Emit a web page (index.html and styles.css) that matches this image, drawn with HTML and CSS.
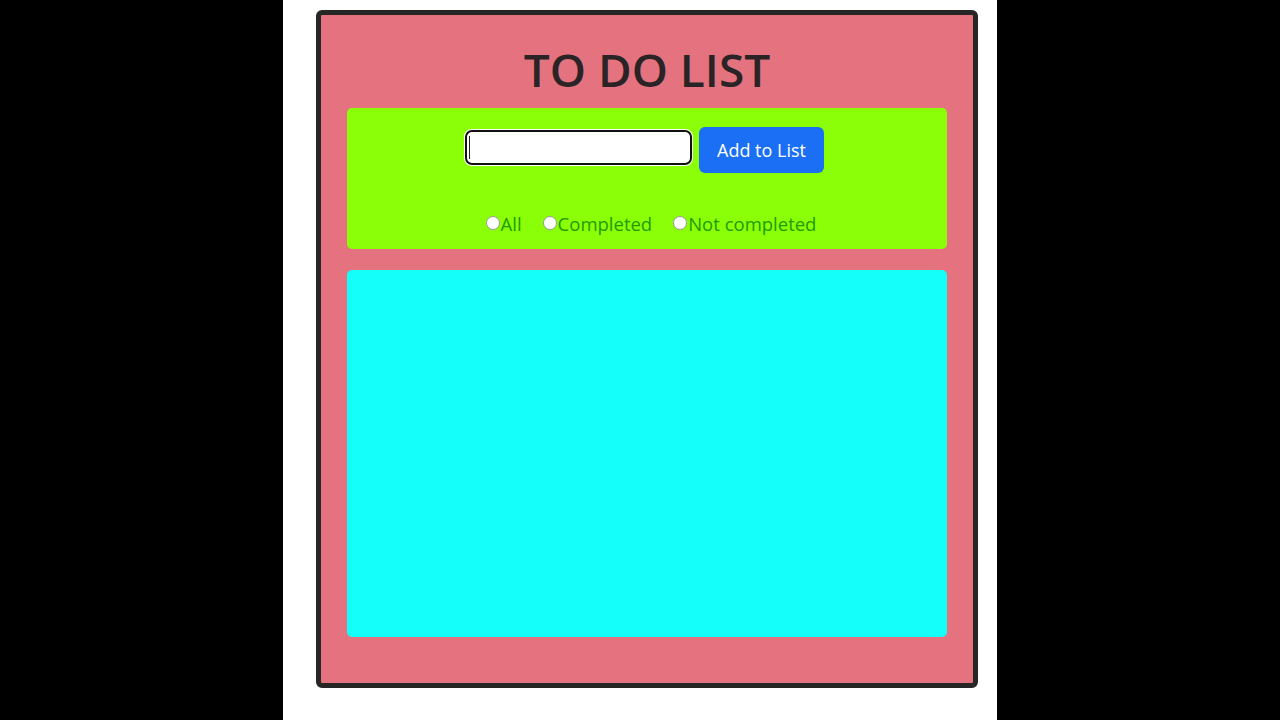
FILE: index.html
```html
<!DOCTYPE html>
<html>
<head>
<meta charset="utf-8">
<link rel="stylesheet" href="styles.css">
</head>
<body>
<div class="page">
  <div class="card">
    <h1 class="title">TO DO LIST</h1>
    <div class="controls">
      <div class="add-row">
        <div class="input-wrap">
          <input class="task-input" type="text">
          <span class="caret"></span>
        </div>
        <button class="add-btn">Add to List</button>
      </div>
      <div class="filters">
        <label class="filter"><span class="radio"></span>All</label>
        <label class="filter"><span class="radio"></span>Completed</label>
        <label class="filter"><span class="radio"></span>Not completed</label>
      </div>
    </div>
    <div class="list"></div>
  </div>
</div>
</body>
</html>
```
FILE: styles.css
```css
html, body {
  margin: 0;
  height: 100%;
  background: #000;
}
body {
  display: flex;
  justify-content: flex-start;
  font-family: "Open Sans", "Noto Sans", sans-serif;
}
.page {
  margin-left: 283px;
  width: 714px;
  height: 720px;
  background: #fff;
  padding: 10px 0 0 33px;
  box-sizing: border-box;
}
.card {
  width: 662px;
  height: 678px;
  box-sizing: border-box;
  border: 5px solid #262626;
  border-radius: 6px;
  background: #e5737f;
  padding: 0 26px;
  display: flex;
  flex-direction: column;
}
.title {
  margin: 0;
  height: 93px;
  box-sizing: border-box;
  padding-top: 26px;
  text-align: center;
  font-size: 46px;
  font-weight: 600;
  line-height: 56px;
  color: #2a2426;
}
.controls {
  height: 141px;
  background: #8aff08;
  border-radius: 5px;
  display: flex;
  flex-direction: column;
  align-items: center;
  padding-top: 19px;
  box-sizing: border-box;
}
.add-row {
  display: flex;
  align-items: flex-start;
  gap: 7px;
  margin-left: -5px;
}
.input-wrap {
  position: relative;
  margin-top: 3px;
}
.task-input {
  display: block;
  width: 227px;
  height: 35px;
  box-sizing: border-box;
  border: 2px solid #111;
  border-radius: 7px;
  background: #fff;
  outline: none;
  box-shadow: 0 0 0 1px #fff;
  margin: 0;
}
.caret {
  position: absolute;
  left: 4px;
  top: 6px;
  width: 1px;
  height: 23px;
  background: #222;
}
.add-btn {
  width: 125px;
  height: 46px;
  border: none;
  border-radius: 6px;
  background: #1a6ff4;
  color: #fff;
  font-family: "Open Sans", "Noto Sans", sans-serif;
  font-size: 18px;
  font-weight: 500;
  margin: 0;
  padding: 0;
}
.filters {
  display: flex;
  gap: 21px;
  margin-top: 38px;
  margin-left: 8px;
}
.filter {
  display: flex;
  align-items: center;
  font-size: 18.5px;
  color: #239a00;
  line-height: 26px;
}
.radio {
  width: 14px;
  height: 14px;
  box-sizing: border-box;
  border-radius: 50%;
  background: #fff;
  border: 1px solid #9a9a9a;
  margin-right: 1px;
  margin-top: -2px;
}
.list {
  margin-top: 21px;
  height: 367px;
  background: #14fffa;
  border-radius: 5px;
}
```
